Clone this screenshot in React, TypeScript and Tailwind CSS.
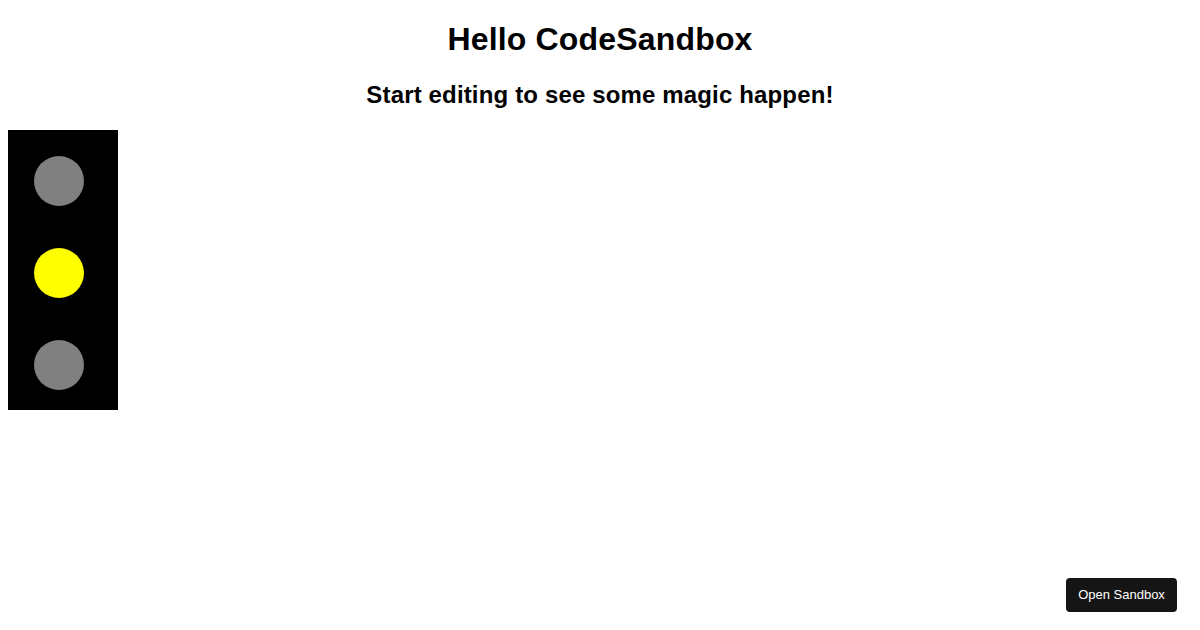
export default function App() {
  const lights = ["bg-[#808080]", "bg-[#ffff00]", "bg-[#808080]"];

  return (
    <div className="min-h-[630px] bg-white px-2 pt-[21px] font-['Liberation_Sans',Arial,sans-serif] text-black">
      <h1 className="text-center text-[32px] font-bold leading-[37px] tracking-[0.17px]">
        Hello CodeSandbox
      </h1>
      <h2 className="mt-[23px] text-center text-[24px] font-bold leading-[28px] tracking-[0.15px]">
        Start editing to see some magic happen!
      </h2>

      {/* traffic light */}
      <div className="mt-[21px] flex h-[280px] w-[110px] flex-col items-start gap-[42px] bg-black pl-[26px] pt-[26px]">
        {lights.map((c, i) => (
          <div key={i} className={`h-[50px] w-[50px] rounded-full ${c}`} />
        ))}
      </div>

      <button className="fixed bottom-[18px] right-[23px] h-[34px] w-[111px] rounded-[4px] bg-[#151515] text-[13px] text-white">
        Open Sandbox
      </button>
    </div>
  );
}
